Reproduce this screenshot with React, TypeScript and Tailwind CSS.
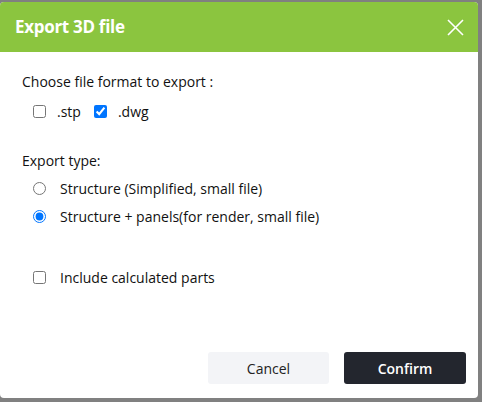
// Export 3D file dialog
import { useState } from "react";

function App() {
  const [stp, setStp] = useState(false);
  const [dwg, setDwg] = useState(true);
  const [exportType, setExportType] = useState("panels");
  const [calcParts, setCalcParts] = useState(false);

  return (
    <div
      className="w-[482px] h-[402px] bg-[#808080] pt-[2px] pr-[4px] pb-[4px]"
      style={{ fontFamily: '"Open Sans", sans-serif' }}
    >
      <div className="h-full bg-white rounded-[4px] overflow-hidden flex flex-col">
        {/* Header */}
        <div className="h-[50px] bg-[#8bc53f] flex items-center justify-between pl-[15px] pr-[12px] shrink-0">
          <h1 className="text-white text-[17px] font-bold tracking-[-0.3px]">Export 3D file</h1>
          <button className="text-white w-[22px] h-[22px] flex items-center justify-center">
            <svg width="17" height="17" viewBox="0 0 17 17" fill="none" stroke="white" strokeWidth="1.6">
              <path d="M1 1 L16 16 M16 1 L1 16" />
            </svg>
          </button>
        </div>

        {/* Body */}
        <div className="flex-1 pl-[22px] pt-[20px] text-[#111] text-[14px] font-medium">
          <p className="leading-[20px]">Choose file format to export :</p>
          <div className="flex items-center mt-[9px] pl-[11px] h-[20px]">
            <input
              type="checkbox"
              checked={stp}
              onChange={() => setStp(!stp)}
              className="w-[13px] h-[13px] m-0"
            />
            <span className="ml-[11px]">.stp</span>
            <input
              type="checkbox"
              checked={dwg}
              onChange={() => setDwg(!dwg)}
              className="w-[13px] h-[13px] m-0 ml-[13px]"
            />
            <span className="ml-[11px]">.dwg</span>
          </div>

          <p className="leading-[20px] mt-[30px]">Export type:</p>
          <div className="flex flex-col pl-[11px] mt-[7px] gap-[8px]">
            <label className="flex items-center h-[20px]">
              <input
                type="radio"
                name="exportType"
                checked={exportType === "simple"}
                onChange={() => setExportType("simple")}
                className="w-[13px] h-[13px] m-0"
              />
              <span className="ml-[14px]">Structure (Simplified, small file)</span>
            </label>
            <label className="flex items-center h-[20px]">
              <input
                type="radio"
                name="exportType"
                checked={exportType === "panels"}
                onChange={() => setExportType("panels")}
                className="w-[13px] h-[13px] m-0"
              />
              <span className="ml-[14px]">Structure + panels(for render, small file)</span>
            </label>
          </div>

          <label className="flex items-center h-[20px] pl-[11px] mt-[41px]">
            <input
              type="checkbox"
              checked={calcParts}
              onChange={() => setCalcParts(!calcParts)}
              className="w-[13px] h-[13px] m-0"
            />
            <span className="ml-[14px]">Include calculated parts</span>
          </label>
        </div>

        {/* Footer */}
        <div className="flex justify-end gap-[15px] pr-[12px] pb-[14px] shrink-0">
          <button className="w-[121px] h-[32px] rounded-[3px] bg-[#f3f4f7] text-[#222] text-[14px] font-medium">
            Cancel
          </button>
          <button className="w-[122px] h-[32px] rounded-[3px] bg-[#23262e] text-white text-[14px] font-semibold">
            Confirm
          </button>
        </div>
      </div>
    </div>
  );
}

export default App;
